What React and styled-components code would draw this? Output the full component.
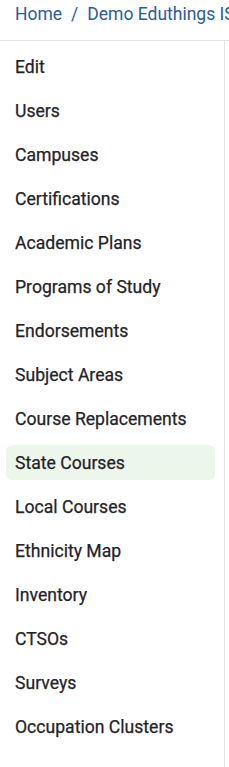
import React from "react";
import styled, { createGlobalStyle } from "styled-components";

const Global = createGlobalStyle`
  html, body { margin: 0; padding: 0; background: #fff; }
  body { font-family: Roboto, "Noto Sans", sans-serif; overflow: hidden; }
`;

const Page = styled.div`
  width: 229px;
  height: 767px;
  display: flex;
  flex-direction: column;
`;

const Breadcrumb = styled.nav`
  height: 41px;
  border-bottom: 1px solid #e3e3e3;
  display: flex;
  align-items: center;
  padding-left: 15px;
  padding-bottom: 12px;
  box-sizing: border-box;
  font-size: 17.5px;
  color: #2b5c98;
  white-space: nowrap;
  overflow: hidden;
  gap: 9px;
`;

const Crumb = styled.span``;
const Sep = styled.span`
  color: #2b5c98;
`;

const Body = styled.div`
  flex: 1;
  display: flex;
`;

const Sidebar = styled.aside`
  width: 225px;
  border-right: 1px solid #e3e3e3;
  padding: 8px 9px 0 6px;
  box-sizing: border-box;
  display: flex;
  flex-direction: column;
  gap: 9px;
`;

const Item = styled.div`
  height: 35px;
  display: flex;
  align-items: center;
  padding-left: 9px;
  border-radius: 6px;
  font-size: 17.6px;
  font-weight: 400;
  color: #1f2328;
  -webkit-text-stroke: 0.25px #1f2328;
  background: ${(p) => (p.$active ? "#edf6ea" : "transparent")};
`;

const items = [
  "Edit",
  "Users",
  "Campuses",
  "Certifications",
  "Academic Plans",
  "Programs of Study",
  "Endorsements",
  "Subject Areas",
  "Course Replacements",
  "State Courses",
  "Local Courses",
  "Ethnicity Map",
  "Inventory",
  "CTSOs",
  "Surveys",
  "Occupation Clusters",
];

export default function App() {
  return (
    <Page>
      <Global />
      <Breadcrumb>
        <Crumb>Home</Crumb>
        <Sep>/</Sep>
        <Crumb>Demo Eduthings ISD</Crumb>
      </Breadcrumb>
      <Body>
        <Sidebar>
          {items.map((t) => (
            <Item key={t} $active={t === "State Courses"}>
              {t}
            </Item>
          ))}
        </Sidebar>
      </Body>
    </Page>
  );
}
